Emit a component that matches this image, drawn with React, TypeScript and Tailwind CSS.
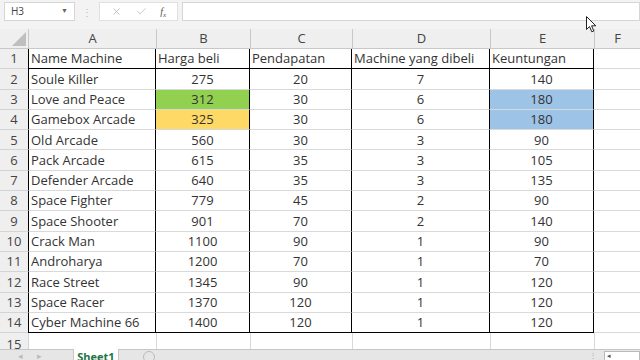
import { X, Check } from "lucide-react";

const rows: [string, number, number, number, number][] = [
  ["Soule Killer", 275, 20, 7, 140],
  ["Love and Peace", 312, 30, 6, 180],
  ["Gamebox Arcade", 325, 30, 6, 180],
  ["Old Arcade", 560, 30, 3, 90],
  ["Pack Arcade", 615, 35, 3, 105],
  ["Defender Arcade", 640, 35, 3, 135],
  ["Space Fighter", 779, 45, 2, 90],
  ["Space Shooter", 901, 70, 2, 140],
  ["Crack Man", 1100, 90, 1, 90],
  ["Androharya", 1200, 70, 1, 70],
  ["Race Street", 1345, 90, 1, 120],
  ["Space Racer", 1370, 120, 1, 120],
  ["Cyber Machine 66", 1400, 120, 1, 120],
];

const headers = ["Name Machine", "Harga beli", "Pendapatan", "Machine yang dibeli", "Keuntungan"];
const widths = ["w-[128px]", "w-[94px]", "w-[102px]", "w-[138px]", "w-[104px]"];
const letters = ["A", "B", "C", "D", "E"];

function bColor(row: number, col: number) {
  if (col === 1 && row === 3) return "bg-[#92d050]";
  if (col === 1 && row === 4) return "bg-[#ffd966]";
  if (col === 4 && (row === 3 || row === 4)) return "bg-[#9dc3e6]";
  return "bg-white";
}

function RowHead({ n }: { n: number }) {
  return (
    <div className="w-[29px] shrink-0 bg-[#efefef] border-r border-b border-[#d4d4d4] flex items-center justify-center pt-[1px] text-[#444]">
      {n}
    </div>
  );
}

export default function App() {
  return (
    <div
      className="w-[640px] h-[360px] overflow-hidden relative bg-[#f3f3f3] flex flex-col text-[13px] text-[#333]"
      style={{ fontFamily: '"Open Sans", "Noto Sans", sans-serif' }}
    >
      {/* formula bar */}
      <div className="h-[22px] shrink-0 flex items-center pt-[1px]">
        <div className="ml-[4px] w-[71px] h-[19px] bg-white border border-[#d6d6d6] flex items-center justify-between px-[6px] text-[10px] text-[#444]">
          <span>H3</span>
          <span className="text-[7px] text-[#666]">▼</span>
        </div>
        <div className="w-[24px] flex justify-center text-[#bbb] text-[10px] leading-none">⋮</div>
        <div className="w-[79px] h-[19px] bg-white border border-[#e0e0e0] flex items-center justify-around px-[4px]">
          <X size={11} className="text-[#c0c0c0]" />
          <Check size={11} className="text-[#c0c0c0]" />
          <span className="italic text-[10px] text-[#555]" style={{ fontFamily: '"Liberation Serif", serif' }}>
            f<sub className="text-[7px]">x</sub>
          </span>
        </div>
        <div className="ml-[4px] flex-1 h-[19px] bg-white border border-[#d6d6d6]" />
      </div>
      <div className="h-[7px] shrink-0" />

      {/* column headers */}
      <div className="h-[20px] shrink-0 flex bg-[#efefef] text-[#444]">
        <div className="w-[29px] shrink-0 border-r border-b border-[#c8c8c8] flex items-end justify-end pr-[2px] pb-[2px]">
          <div className="w-0 h-0 border-l-[14px] border-l-transparent border-b-[14px] border-b-[#bfbfbf]" />
        </div>
        {letters.map((l, i) => (
          <div key={l} className={`${widths[i]} shrink-0 border-r border-b border-[#c8c8c8] flex items-center justify-center pt-[1px]`}>
            {l}
          </div>
        ))}
        <div className="flex-1 border-b border-[#c8c8c8] flex items-center justify-center pt-[1px]">F</div>
      </div>

      {/* header row 1 */}
      <div className="h-[20.3px] shrink-0 flex">
        <RowHead n={1} />
        {headers.map((h, i) => (
          <div
            key={h}
            className={`${widths[i]} shrink-0 bg-white border-r border-b border-black flex items-center pl-[2px] pt-[1px] whitespace-nowrap overflow-hidden ${i === 0 ? "border-l border-l-black -ml-[1px]" : ""}`}
          >
            {h}
          </div>
        ))}
        <div className="flex-1 bg-white border-b border-[#d9d9d9]" />
      </div>

      {rows.map((r, ri) => {
        const rowNum = ri + 2;
        const last = ri === rows.length - 1;
        return (
          <div key={rowNum} className="h-[20.3px] shrink-0 flex">
            <RowHead n={rowNum} />
            {r.map((v, ci) => (
              <div
                key={ci}
                className={`${widths[ci]} shrink-0 ${bColor(rowNum, ci)} border-r border-r-black border-b ${last ? "border-b-black" : "border-b-[#d9d9d9]"} flex items-center pt-[1px] whitespace-nowrap ${ci === 0 ? "pl-[2px] border-l border-l-black -ml-[1px]" : "justify-center"}`}
              >
                {v}
              </div>
            ))}
            <div className="flex-1 bg-white border-b border-[#d9d9d9]" />
          </div>
        );
      })}

      {/* row 15 */}
      <div className="flex-1 flex min-h-0 overflow-hidden">
        <div className="w-[29px] shrink-0 bg-[#efefef] border-r border-[#d4d4d4] flex justify-center pt-[2px] text-[#444]">15</div>
        {widths.map((w, i) => (
          <div key={i} className={`${w} shrink-0 bg-white border-r border-[#d9d9d9]`} />
        ))}
        <div className="flex-1 bg-white" />
      </div>

      {/* sheet tabs */}
      <div className="h-[11px] shrink-0 bg-[#e6e6e6] border-t border-[#c6c6c6] flex items-start relative">
        <div className="w-[73px] flex gap-[14px] pl-[18px] text-[#bbb] text-[9px] leading-[12px]">
          <span>◂</span>
          <span>▸</span>
        </div>
        <div className="w-[46px] h-[14px] -mt-[1px] bg-white border-x border-[#c6c6c6] flex justify-center text-[#217346] font-bold text-[11px] leading-[14px] pt-[1px]">
          Sheet1
        </div>
        <div className="ml-[24px] mt-[1px] w-[12px] h-[12px] rounded-full border border-[#bbb]" />
        <div className="absolute left-[589px] top-[1px] text-[#aaa] text-[8px] leading-none">⋮</div>
        <div className="absolute left-[604px] top-[1px] w-[36px] h-[12px] bg-white border border-[#bbb] text-[7px] leading-none pl-[2px] text-[#555]">◂</div>
      </div>

      {/* mouse cursor */}
      <svg className="absolute left-[586px] top-[16px]" width="11" height="17" viewBox="0 0 11 17">
        <path d="M0.5 0.5 L0.5 13.5 L3.5 10.5 L5.8 15.8 L7.8 15 L5.6 9.8 L9.8 9.8 Z" fill="#fff" stroke="#222" strokeWidth="1" />
      </svg>
    </div>
  );
}
